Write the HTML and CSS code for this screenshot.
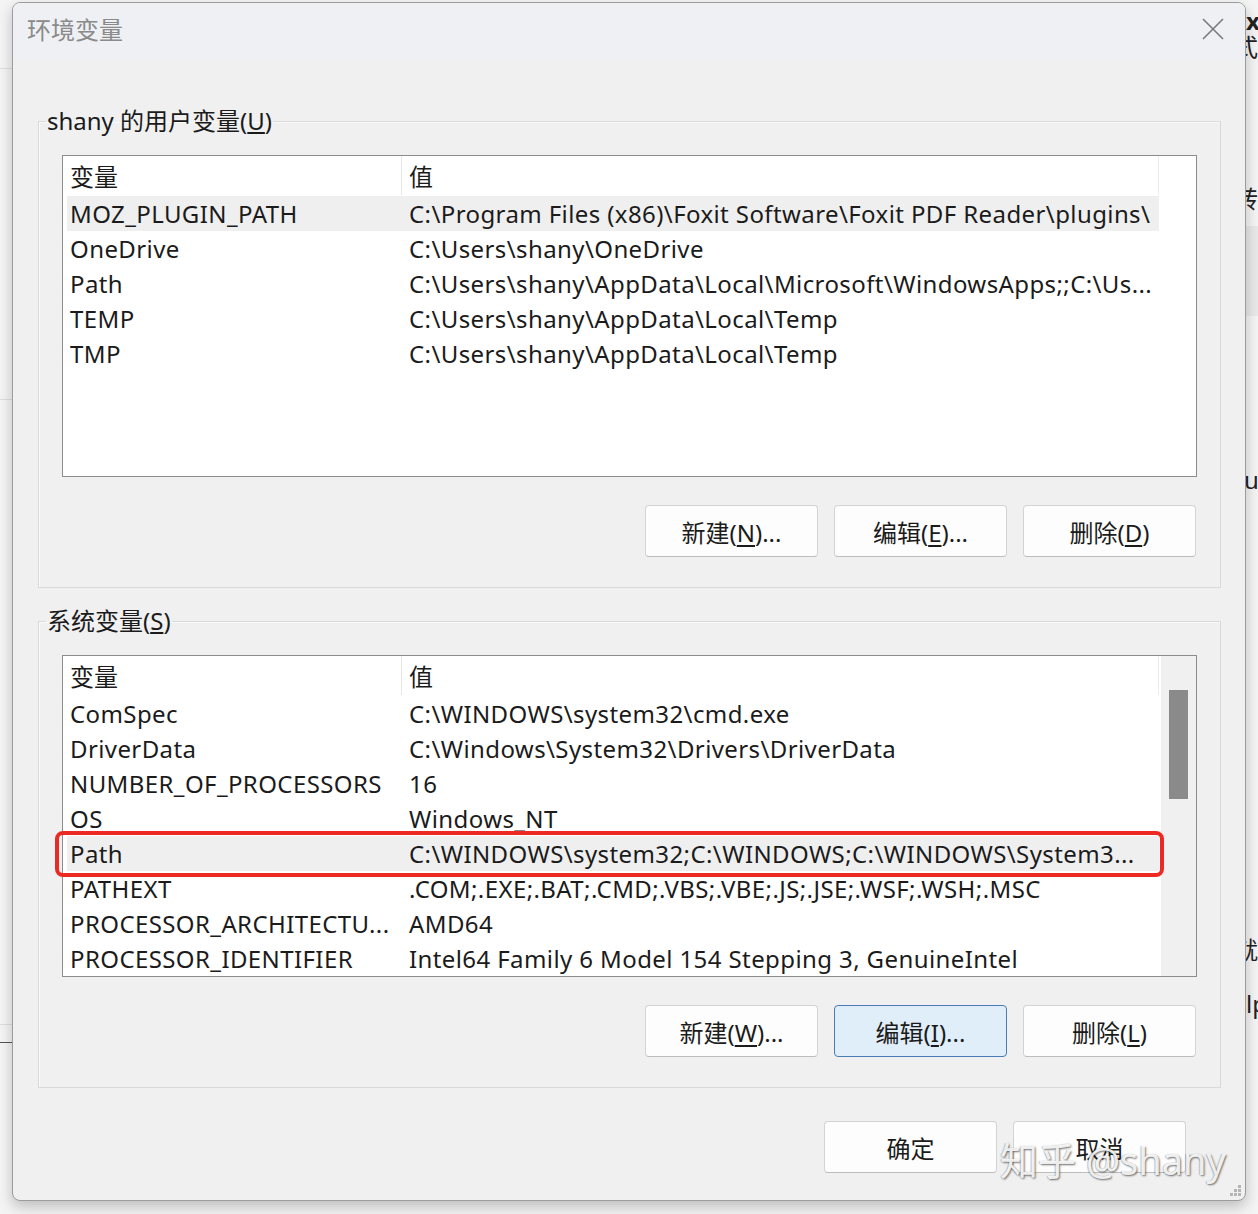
FILE: index.html
```html
<!DOCTYPE html>
<html>
<head>
  <meta charset="UTF-8">
  <title>环境变量</title>
  <link rel="stylesheet" href="styles.css">
</head>
<body>
  <div class="desk">
    <!-- window behind, left side -->
    <div class="edge-left">
      <div class="edge-line l1"></div>
      <div class="edge-line l2"></div>
      <div class="edge-line l3"></div>
      <div class="edge-line l4"></div>
    </div>

    <div class="dialog">
      <div class="titlebar">
        <span class="title">环境变量</span>
        <svg class="close" width="22" height="22" viewBox="0 0 22 22">
          <path d="M1 1 L21 21 M21 1 L1 21" stroke="#7a7a7a" stroke-width="1.6" fill="none"/>
        </svg>
      </div>

      <div class="dialog-body">
        <fieldset class="group">
          <legend>shany 的用户变量(<u>U</u>)</legend>
          <div class="list">
            <div class="row head"><div class="c1">变量</div><div class="c2">值</div></div>
            <div class="row sel"><div class="c1">MOZ_PLUGIN_PATH</div><div class="c2">C:\Program Files (x86)\Foxit Software\Foxit PDF Reader\plugins\</div></div>
            <div class="row"><div class="c1">OneDrive</div><div class="c2">C:\Users\shany\OneDrive</div></div>
            <div class="row"><div class="c1">Path</div><div class="c2">C:\Users\shany\AppData\Local\Microsoft\WindowsApps;;C:\Us...</div></div>
            <div class="row"><div class="c1">TEMP</div><div class="c2">C:\Users\shany\AppData\Local\Temp</div></div>
            <div class="row"><div class="c1">TMP</div><div class="c2">C:\Users\shany\AppData\Local\Temp</div></div>
          </div>
          <div class="btns">
            <button class="btn">新建(<u>N</u>)...</button>
            <button class="btn">编辑(<u>E</u>)...</button>
            <button class="btn">删除(<u>D</u>)</button>
          </div>
        </fieldset>

        <fieldset class="group">
          <legend>系统变量(<u>S</u>)</legend>
          <div class="list has-scroll">
            <div class="rows">
              <div class="row head"><div class="c1">变量</div><div class="c2">值</div></div>
              <div class="row"><div class="c1">ComSpec</div><div class="c2">C:\WINDOWS\system32\cmd.exe</div></div>
              <div class="row"><div class="c1">DriverData</div><div class="c2">C:\Windows\System32\Drivers\DriverData</div></div>
              <div class="row"><div class="c1">NUMBER_OF_PROCESSORS</div><div class="c2">16</div></div>
              <div class="row"><div class="c1">OS</div><div class="c2">Windows_NT</div></div>
              <div class="row sel marked"><div class="c1">Path</div><div class="c2">C:\WINDOWS\system32;C:\WINDOWS;C:\WINDOWS\System3...</div></div>
              <div class="row"><div class="c1">PATHEXT</div><div class="c2">.COM;.EXE;.BAT;.CMD;.VBS;.VBE;.JS;.JSE;.WSF;.WSH;.MSC</div></div>
              <div class="row"><div class="c1">PROCESSOR_ARCHITECTU...</div><div class="c2">AMD64</div></div>
              <div class="row"><div class="c1">PROCESSOR_IDENTIFIER</div><div class="c2">Intel64 Family 6 Model 154 Stepping 3, GenuineIntel</div></div>
            </div>
            <div class="scrollbar"><div class="thumb"></div></div>
          </div>
          <div class="btns">
            <button class="btn">新建(<u>W</u>)...</button>
            <button class="btn focus">编辑(<u>I</u>)...</button>
            <button class="btn">删除(<u>L</u>)</button>
          </div>
        </fieldset>

        <div class="footer">
          <button class="btn">确定</button>
          <button class="btn">取消</button>
        </div>
      </div>

      <div class="watermark">知乎 @shany</div>
      <svg class="grip" width="14" height="14" viewBox="0 0 14 14">
        <rect x="10" y="2" width="3" height="3" fill="#b5b5b5"/>
        <rect x="6" y="6" width="3" height="3" fill="#b5b5b5"/>
        <rect x="10" y="6" width="3" height="3" fill="#b5b5b5"/>
        <rect x="2" y="10" width="3" height="3" fill="#b5b5b5"/>
        <rect x="6" y="10" width="3" height="3" fill="#b5b5b5"/>
        <rect x="10" y="10" width="3" height="3" fill="#b5b5b5"/>
      </svg>
    </div>

    <!-- window behind, right side -->
    <div class="edge-right">
      <span class="frag f1">x</span>
      <span class="frag f2">式</span>
      <span class="frag f3">转</span>
      <div class="edge-band"></div>
      <span class="frag f4">u</span>
      <span class="frag f5">就</span>
      <span class="frag f6">lp</span>
    </div>
  </div>
</body>
</html>
```

FILE: styles.css
```css
/* Page / desktop behind the dialog */
html, body {
  margin: 0;
  padding: 0;
  background-color: #f4f4f4;
  font-family: 'Noto Sans', 'Noto Sans CJK SC', sans-serif;
  color: #1b1b1b;
}
.desk {
  display: flex;
  align-items: flex-start;
  height: 1214px;
  overflow: hidden;
  padding-top: 2px;
  box-sizing: border-box;
}
.edge-left {
  width: 12px;
  flex: none;
  height: 1212px;
  display: flex;
  flex-direction: column;
}
.edge-line {
  height: 1px;
  background-color: #dedede;
}
.l1 { margin-top: 66px; }
.l2 { margin-top: 330px; }
.l3 { margin-top: 624px; }
.l4 { margin-top: 17px; background-color: #555555; }
.edge-right {
  width: 12px;
  flex: none;
  height: 1212px;
  display: flex;
  flex-direction: column;
  overflow: hidden;
  font-size: 24px;
  line-height: 26px;
  color: #222222;
}
.frag {
  display: block;
  margin-left: -6px;
}
.f1 { margin-top: 6px; margin-left: 0; font-weight: bold; }
.f2 { margin-top: 0; margin-left: -12px; }
.f3 { margin-top: 126px; margin-left: -12px; }
.edge-band {
  height: 90px;
  margin-top: 14px;
  background-color: #e8e8e8;
}
.f4 { margin-top: 151px; margin-left: -2px; }
.f5 { margin-top: 444px; margin-left: -12px; }
.f6 { margin-top: 28px; margin-left: 0; }

/* Dialog window */
.dialog {
  position: relative;
  flex: none;
  width: 1234px;
  height: 1199px;
  box-sizing: border-box;
  border: 1px solid #9c9c9c;
  border-radius: 8px;
  background-color: #f0f0f0;
  box-shadow: 0 6px 14px rgba(0, 0, 0, 0.22);
  overflow: hidden;
}
.titlebar {
  height: 56px;
  background-color: #eef0f4;
  display: flex;
  align-items: center;
  justify-content: space-between;
  padding: 0 21px 0 14px;
}
.title {
  font-size: 24px;
  color: #8a8a8a;
  margin-top: -6px;
}
.close {
  margin-top: -4px;
}
.dialog-body {
  padding: 48px 24px 0 25px;
}

/* Group boxes */
.group {
  margin: 0;
  padding: 20px 23px 30px;
  border: 1px solid #d9d9d9;
  box-shadow: inset 1px 1px 0 #fafafa;
}
.group + .group {
  margin-top: 19px;
}
.group legend {
  font-size: 24px;
  line-height: 28px;
  padding: 0 1px;
  margin-left: -16px;
}

/* List views */
.list {
  height: 322px;
  box-sizing: border-box;
  border: 1px solid #8c8c8c;
  background-color: #ffffff;
  padding-left: 4px;
}
.list.has-scroll {
  display: flex;
  justify-content: space-between;
}
.row {
  position: relative;
  display: flex;
  width: 1092px;
  height: 35px;
  line-height: 35px;
  font-size: 24px;
  letter-spacing: 0.4px;
  white-space: nowrap;
}
.row.head {
  height: 40px;
  line-height: 42px;
  letter-spacing: 0;
}
.row.sel {
  background-color: #efefef;
}
.c1 {
  width: 335px;
  flex: none;
  box-sizing: border-box;
  padding-left: 3px;
  overflow: hidden;
}
.c2 {
  flex: 1;
  padding-left: 7px;
  overflow: hidden;
}
.head .c1 {
  border-right: 1px solid #e6e6e6;
  height: 39px;
}
.head .c2 {
  border-right: 1px solid #ececec;
  height: 39px;
}
/* red annotation around the Path row */
.row.marked::after {
  content: "";
  position: absolute;
  left: -12px;
  right: -5px;
  top: -5px;
  bottom: -6px;
  border: 4px solid #ec2a23;
  border-radius: 8px;
}
.scrollbar {
  width: 35px;
  background-color: #f0f0f0;
  padding-top: 34px;
  display: flex;
  justify-content: center;
}
.thumb {
  width: 19px;
  height: 109px;
  background-color: #8a8a8a;
}

/* Buttons */
.btns {
  display: flex;
  justify-content: flex-end;
  gap: 16px;
  margin-top: 28px;
  padding-right: 1px;
}
.btn {
  width: 173px;
  height: 52px;
  box-sizing: border-box;
  border: 1px solid #d3d3d3;
  border-bottom-color: #bdbdbd;
  border-radius: 4px;
  background-color: #fdfdfd;
  font-family: 'Noto Sans', 'Noto Sans CJK SC', sans-serif;
  font-size: 24px;
  color: #1b1b1b;
  padding: 0;
}
.btn u {
  text-underline-offset: 3px;
}
.btn.focus {
  background-color: #e0eef9;
  border-color: #4a7db5;
}
.footer {
  display: flex;
  justify-content: flex-end;
  gap: 16px;
  margin-top: 33px;
  padding-right: 35px;
}

/* Overlays */
.watermark {
  position: absolute;
  right: 19px;
  bottom: 18px;
  font-size: 38px;
  line-height: 44px;
  color: rgba(255, 255, 255, 0.9);
  text-shadow: 1px 1px 2px rgba(0, 0, 0, 0.55), -1px 0 1px rgba(0, 0, 0, 0.2);
}
.grip {
  position: absolute;
  right: 3px;
  bottom: 3px;
}
```
